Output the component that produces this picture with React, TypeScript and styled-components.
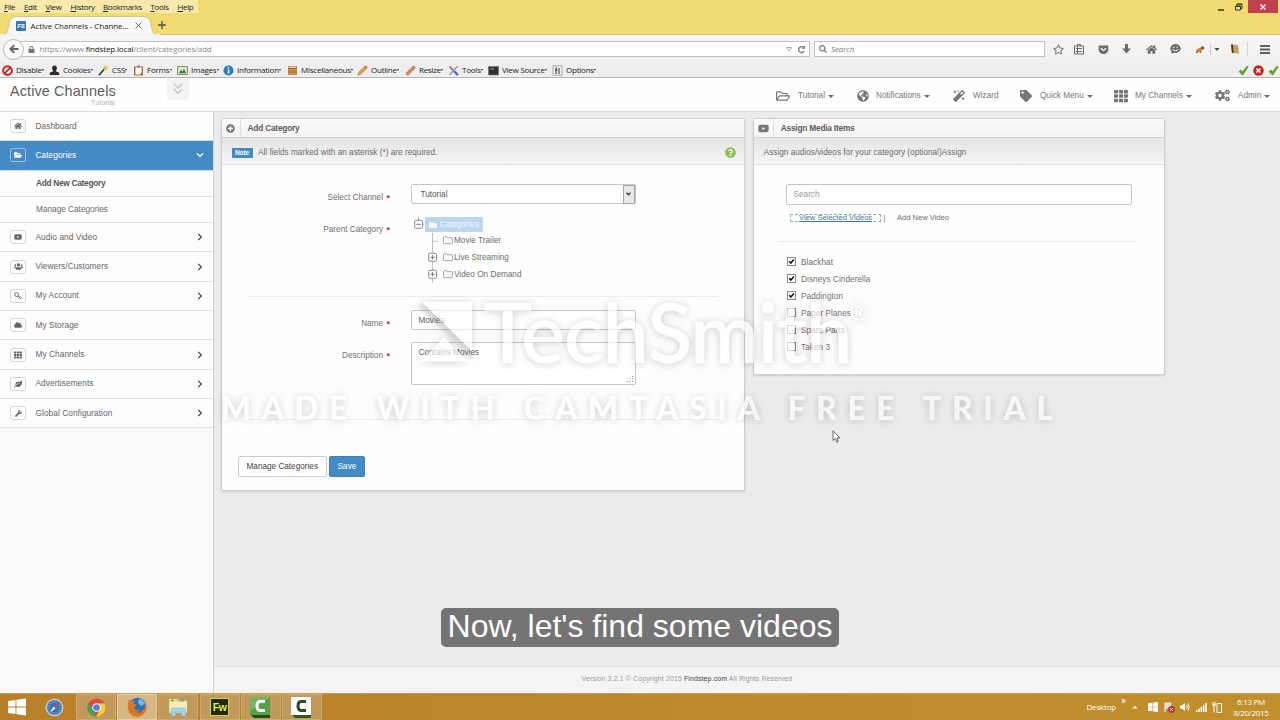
import React from "react";
import styled, { createGlobalStyle, css } from "styled-components";
import {
  FaRegFolderOpen, FaGlobeAmericas, FaMagic, FaTag, FaTh, FaCogs, FaHome, FaFolderOpen, FaYoutube,
  FaUsers, FaCloud, FaLeaf, FaWrench, FaPlusCircle, FaQuestionCircle, FaChevronRight, FaChevronDown,
  FaGetPocket, FaRegStar, FaLock, FaSearch, FaFolder,
} from "react-icons/fa";

const Global = createGlobalStyle`
  * { box-sizing: border-box; }
  html, body { margin: 0; overflow: hidden; }
  svg { display: block; flex: none; }
`;

const UI = `"Open Sans", "Noto Sans", sans-serif`;
const ARIAL = `"Liberation Sans", Arial, sans-serif`;

const Screen = styled.div`
  position: relative;
  width: 1280px;
  height: 720px;
  overflow: hidden;
  display: flex;
  flex-direction: column;
  font: 8px/10px ${ARIAL};
  color: #6f6f6f;
  white-space: nowrap;
`;

/* ---------- browser chrome ---------- */
const TitleBar = styled.div`
  height: 13px;
  background: #f0dc70;
  display: flex;
  justify-content: space-between;
  flex: none;
`;
const MenuBar = styled.div`
  width: 198px;
  background: #f6e9ab;
  display: flex;
  padding-left: 4px;
  font: 8px/13px ${UI};
  letter-spacing: -0.35px;
  color: #222;
`;
const MenuItem = styled.div<{ $w: number }>`
  width: ${(p) => p.$w}px;
  &::first-letter { text-decoration: underline; }
`;
const WinButtons = styled.div`
  display: flex;
  align-items: center;
  padding-right: 2px;
`;
const WinButton = styled.div<{ $w: number; $close?: boolean }>`
  width: ${(p) => p.$w}px;
  height: 13px;
  display: flex;
  align-items: center;
  justify-content: center;
  ${(p) => p.$close && css`background: #c04050;`}
`;
const TabStrip = styled.div`
  height: 22px;
  background: #f0dc70;
  border-bottom: 1px solid #d3c98c;
  display: flex;
  align-items: flex-end;
  flex: none;
`;
const Tab = styled.div`
  position: relative;
  width: 156px;
  height: 19px;
  margin-bottom: -1px;
  display: flex;
  align-items: center;
  padding-left: 16px;
  font: 8px/18px ${UI};
  letter-spacing: -0.1px;
  color: #222;
`;
const TabShape = styled.svg`
  position: absolute;
  left: 0;
  top: 0;
`;
const TabClose = styled.svg`
  position: relative;
`;
const Favicon = styled.span`
  position: relative;
  width: 10px;
  height: 10px;
  margin-right: 4.5px;
  background: #3678b9;
  border-radius: 1px;
  color: #fff;
  font: italic bold 6px/10px ${ARIAL};
  text-align: center;
`;
const TabTitle = styled.span`
  position: relative;
  width: 104.5px;
`;
const NewTab = styled.div`
  height: 19px;
  padding: 6px 0 0 2px;
`;
const NavBar = styled.div`
  height: 28px;
  background: linear-gradient(#f6f6f8, #efefef);
  display: flex;
  align-items: center;
  flex: none;
`;
const BackButton = styled.div`
  position: relative;
  width: 21px;
  height: 21px;
  margin-left: 3px;
  border-radius: 50%;
  border: 1px solid #b5b5b5;
  background: #fbfbfb;
  display: flex;
  align-items: center;
  justify-content: center;
  z-index: 1;
`;
const Field = styled.div<{ $w: number; $ml: number }>`
  width: ${(p) => p.$w}px;
  margin-left: ${(p) => p.$ml}px;
  height: 16px;
  border: 1px solid #c2c2c4;
  background: #fff;
  display: flex;
  align-items: center;
  font: 8px/14px ${UI};
  color: #8a8a8a;
`;
const Url = styled.span`
  flex: 1;
  margin-left: 4.5px;
  letter-spacing: -0.15px;
  b { font-weight: 400; color: #111; }
`;
const SearchHint = styled.i`
  margin-left: 4px;
  color: #777;
  letter-spacing: -0.1px;
`;
const NavIcons = styled.div`
  display: flex;
  align-items: center;
  color: #6b6b6d;
`;
const Slot = styled.span<{ $w: number }>`
  width: ${(p) => p.$w}px;
  height: 14px;
  display: flex;
  align-items: center;
`;
const DevBar = styled.div`
  height: 15px;
  background: #eeeeee;
  border-bottom: 1px solid #b4b4b4;
  display: flex;
  align-items: center;
  padding-left: 2px;
  flex: none;
`;
const DevItem = styled.div<{ $w: number }>`
  width: ${(p) => p.$w}px;
  display: flex;
  align-items: center;
  gap: 3px;
  font: 8px/14px ${UI};
  letter-spacing: -0.23px;
  color: #222;
  > svg { width: 11px; height: 11px; }
`;
const Tiny = styled.span`
  display: inline-block;
  border: 1.6px solid transparent;
  border-top: 2px solid #333;
  border-bottom: 0;
  vertical-align: 2px;
  margin-left: 0.3px;
`;
const DevStatus = styled.div`
  margin-left: auto;
  display: flex;
  gap: 4px;
  padding-right: 1.5px;
`;

/* ---------- web page ---------- */
const AppHeader = styled.header`
  height: 34px;
  flex: none;
  background: #fefefe;
  border-bottom: 1px solid #dcdcdc;
  display: flex;
`;
const Brand = styled.div`
  width: 116px;
  padding: 5px 1px 0 10px;
  text-align: right;
`;
const BrandName = styled.div`
  font-size: 14.4px;
  line-height: 16px;
  letter-spacing: 0.12px;
  color: #5c5c5c;
  text-align: left;
`;
const BrandSub = styled.div`
  font-size: 7px;
  line-height: 8px;
  color: #b2b2b2;
  letter-spacing: 0.1px;
`;
const Collapse = styled.div`
  width: 22px;
  height: 22px;
  margin-left: 51px;
  background: #f3f3f3;
  border-radius: 0 0 3px 3px;
  padding: 5px 0 0 6px;
`;
const TopNav = styled.nav`
  margin-left: auto;
  display: flex;
  height: 35px;
  align-items: center;
  color: #777;
`;
const TopItem = styled.div<{ $w: number; $gap: number }>`
  width: ${(p) => p.$w}px;
  display: flex;
  align-items: center;
  font-size: 8.2px;
  > svg { margin-right: ${(p) => p.$gap}px; }
`;
const Caret = styled.i`
  margin: 1px 0 0 3px;
  border: 3px solid transparent;
  border-top: 3px solid #6b6b6b;
  border-bottom: 0;
`;
const Page = styled.div`
  flex: 1;
  min-height: 0;
  display: flex;
`;
const Sidebar = styled.aside`
  width: 213.5px;
  flex: none;
  background: #f9f9f9;
  border-right: 1px solid #d2d2d2;
`;
const SideItem = styled.div<{ $active?: boolean }>`
  height: 29.33px;
  padding: 0 9px 0 10px;
  display: flex;
  align-items: center;
  border-bottom: 1px solid #e0e0e0;
  background: ${(p) => (p.$active ? "#448bc6" : "#fdfdfd")};
  color: ${(p) => (p.$active ? "#fff" : "#666")};
  font-size: 8.3px;
  line-height: 11px;
  letter-spacing: 0.06px;
  > svg:last-child { margin-left: auto; }
`;
const IconBox = styled.span<{ $active?: boolean }>`
  width: 16px;
  height: 14px;
  margin-right: 9.5px;
  border: 1px solid ${(p) => (p.$active ? "#9cc4e6" : "#d5d5d5")};
  border-radius: 2.5px;
  display: flex;
  align-items: center;
  justify-content: center;
`;
const SubItem = styled.div<{ $bold?: boolean }>`
  height: 26.2px;
  padding-left: 36px;
  line-height: ${(p) => (p.$bold ? 25 : 24)}px;
  border-bottom: 1px solid #e0e0e0;
  background: #fdfdfd;
  font-size: 8.3px;
  letter-spacing: ${(p) => (p.$bold ? "-0.28px" : "-0.03px")};
  font-weight: ${(p) => (p.$bold ? 700 : 400)};
  color: ${(p) => (p.$bold ? "#555" : "#6c6c6c")};
`;
const Main = styled.main`
  flex: 1;
  display: flex;
  flex-direction: column;
  background: #ebebeb;
`;
const Panels = styled.div`
  flex: 1;
  display: flex;
  align-items: flex-start;
  gap: 7.6px;
  padding: 6px 0 0 7px;
`;
const Panel = styled.section<{ $w: number; $h: number }>`
  width: ${(p) => p.$w}px;
  height: ${(p) => p.$h}px;
  background: #fdfdfd;
  border: 1px solid #d0d0d0;
  border-radius: 2px;
  box-shadow: 0 1px 2px rgba(0, 0, 0, 0.15);
`;
const PanelHead = styled.div`
  height: 19px;
  display: flex;
  align-items: center;
  background: linear-gradient(#fafafa, #f3f3f3);
  border-bottom: 1px solid #cfcfcf;
  font-weight: 700;
  font-size: 8.3px;
  line-height: 12px;
  letter-spacing: -0.2px;
  color: #5c5c5c;
`;
const HeadIcon = styled.span<{ $w: number }>`
  width: ${(p) => p.$w}px;
  height: 18px;
  margin-right: 7px;
  border-right: 1px solid #ddd;
  display: flex;
  align-items: center;
  justify-content: center;
  color: #777;
`;
const PanelNote = styled.div`
  height: 27px;
  padding: 3px 8px 0 10px;
  display: flex;
  align-items: center;
  background: linear-gradient(#e4e4e4, #f5f5f5);
  border-bottom: 1px solid #dedede;
  font-size: 8.2px;
  letter-spacing: 0.02px;
  color: #6c6c6c;
  > svg { margin-left: auto; }
`;
const Badge = styled.b`
  width: 21px;
  height: 10px;
  margin-right: 5.5px;
  background: #448bc6;
  color: #fff;
  font-size: 6.5px;
  line-height: 10px;
  text-align: center;
  letter-spacing: -0.1px;
`;
const FormBody = styled.div`
  padding: 19px 26px 0;
`;
const FormRow = styled.div<{ $mb: number }>`
  display: flex;
  align-items: flex-start;
  margin-bottom: ${(p) => p.$mb}px;
`;
const RowLabel = styled.label`
  display: flex;
  justify-content: flex-end;
  width: 142.5px;
  padding-top: 8.6px;
  margin-right: 20.5px;
  font-size: 8.2px;
  letter-spacing: 0px;
  b { color: #c0305a; margin-left: 3.5px; font-size: 9px; }
`;
const Input = styled.div<{ $h?: number }>`
  width: 225px;
  height: ${(p) => p.$h ?? 20}px;
  border: 1px solid #c6c6c6;
  border-radius: 2px;
  background: #fff;
  padding: 5px 0 0 7px;
  font-size: 8.2px;
  color: #606060;
  display: flex;
  justify-content: space-between;
`;
const SelectBox = styled(Input)`
  padding: 0 0 0 9px;
  align-items: center;
  line-height: 12px;
  color: #555;
`;
const SelectValue = styled.span`
  padding-top: 2px;
`;
const SelectArrow = styled.span`
  width: 11.5px;
  height: 19px;
  background: #e8e8e8;
  border: 1px solid #a5a5a5;
  display: flex;
  align-items: center;
  justify-content: center;
`;
const Grip = styled.svg`
  align-self: flex-end;
  margin: 0 1px 1px 0;
`;
const Rule = styled.hr<{ $mt: number; $mb: number }>`
  height: 1px;
  border: 0;
  background: #ececec;
  margin: ${(p) => p.$mt}px 0 ${(p) => p.$mb}px;
`;
const Tree = styled.div`
  width: 225px;
  padding-left: 3px;
`;
const TreeRow = styled.div<{ $child?: boolean }>`
  height: 16.65px;
  padding-left: ${(p) => (p.$child ? 14.5 : 0)}px;
  display: flex;
  align-items: center;
  font-size: 8.2px;
  line-height: 12px;
  letter-spacing: 0.02px;
  color: #6c6c6c;
  > svg:nth-child(2) { margin: 0 1px 0 5px; }
`;
const TreeLabel = styled.span`
  padding-top: 1px;
`;
const TreeSelected = styled.span`
  height: 14.5px;
  width: 58px;
  margin-left: 1px;
  padding: 1px 0 0 4px;
  gap: 3px;
  display: flex;
  align-items: center;
  background: #bdd6f0;
  border-radius: 1px;
  color: #f1f7fd;
`;
const Actions = styled.div`
  display: flex;
  gap: 2px;
  margin-left: -10px;
`;
const Button = styled.button<{ $w: number; $primary?: boolean }>`
  width: ${(p) => p.$w}px;
  height: 21px;
  padding: 0;
  border-radius: 2px;
  border: 1px solid ${(p) => (p.$primary ? "#3b80ba" : "#ccc")};
  background: ${(p) => (p.$primary ? "#448bc6" : "#fff")};
  color: ${(p) => (p.$primary ? "#fff" : "#444")};
  font: 8.2px/19px ${ARIAL};
  white-space: nowrap;
`;
const MediaBody = styled.div`
  padding: 19px 27px 0 25.4px;
`;
const MediaSearch = styled(Input)`
  width: 346px;
  height: 20.5px;
  margin: 0 0 9px 7px;
  color: #999;
  padding-left: 6.5px;
`;
const Links = styled.div`
  display: flex;
  align-items: center;
  padding-left: 11px;
  height: 9px;
  font-size: 7.6px;
`;
const FocusLink = styled.a`
  width: 91px;
  height: 8px;
  border: 1px dashed #9aa;
  color: #3f7898;
  text-decoration: underline;
  line-height: 6px;
  text-align: center;
  margin-right: 2.5px;
`;
const AddLink = styled.a`
  margin-left: 11.5px;
  letter-spacing: -0.03px;
`;
const CheckRow = styled.label`
  height: 17.1px;
  display: flex;
  align-items: flex-start;
  padding-left: 7.5px;
  gap: 5.5px;
  font-size: 8.2px;
  letter-spacing: 0.06px;
`;
const CheckLabel = styled.span`
  padding-top: 1px;
`;
const CheckBox = styled.span`
  width: 9px;
  height: 9px;
  border: 1px solid #8a8a8a;
  background: #fff;
`;
const Footer = styled.footer`
  height: 27px;
  background: #f4f4f4;
  border-top: 1px solid #dedede;
  font-size: 7px;
  letter-spacing: 0.1px;
  line-height: 24px;
  padding-left: 368px;
  color: #999;
  b { font-weight: 400; color: #444; }
`;

/* ---------- taskbar ---------- */
const TaskBar = styled.div`
  height: 27px;
  flex: none;
  background: linear-gradient(90deg, #b98029, #c0902c);
  border-top: 1px solid #c79d4e;
  display: flex;
  color: #fff;
`;
const TaskSlot = styled.div<{ $w: number; $state?: "open" | "active" }>`
  width: ${(p) => p.$w}px;
  height: 26px;
  display: flex;
  align-items: center;
  justify-content: center;
  ${(p) => p.$state && css`
    margin-right: 1.2px;
    border: 1px solid ${p.$state === "active" ? "#e4cfa6" : "#cda96d"};
    background: ${p.$state === "active" ? "#d6b783" : "#c1995a"};
  `}
`;
const FwTile = styled.span`
  width: 19px;
  height: 18px;
  border: 1px solid #cbd81e;
  background: #24260b;
  color: #e3ee2c;
  font: bold 10.5px/16px ${ARIAL};
  text-align: center;
  letter-spacing: -0.5px;
`;
const Tray = styled.div`
  margin-left: auto;
  display: flex;
  align-items: center;
  font: 8px/12px ${UI};
  letter-spacing: -0.2px;
`;
const Overflow = styled.span`
  width: 11px;
  margin: -15px 0 0 5px;
  font-size: 10px;
`;
const Clock = styled.div`
  width: 58px;
  text-align: center;
  line-height: 11.5px;
  letter-spacing: -0.3px;
`;

/* ---------- overlays ---------- */
const Watermark = styled.div`
  position: absolute;
  inset: 0;
  pointer-events: none;
  opacity: 0.64;
  color: #fff;
  text-shadow: 0 1px 8px rgba(0, 0, 0, 0.3);
`;
const MarkLogo = styled.svg`
  position: absolute;
  left: 410px;
  top: 292px;
  filter: drop-shadow(0 1px 4px rgba(0, 0, 0, 0.28));
`;
const MarkName = styled.div`
  position: absolute;
  left: 483px;
  top: 283px;
  font: 600 83px/96px Lato, sans-serif;
  letter-spacing: -1.3px;
`;
const MarkReg = styled.div`
  position: absolute;
  left: 849px;
  top: 299px;
  font: 23px/24px Lato, sans-serif;
`;
const MarkLine = styled.div`
  position: absolute;
  left: 221px;
  top: 388px;
  font: 900 31.5px/40px Lato, sans-serif;
  letter-spacing: 10.75px;
`;
const Caption = styled.div`
  position: absolute;
  left: 441px;
  top: 608px;
  width: 398px;
  height: 39px;
  border-radius: 5px;
  background: #747474;
  color: #fff;
  font: 32px/37px ${ARIAL};
  text-align: center;
`;
const Cursor = styled.svg`
  position: absolute;
  left: 832px;
  top: 430px;
`;

const KeyIcon = () => (
  <svg width="8" height="8" viewBox="0 0 8 8" fill="none" stroke="currentColor">
    <circle cx="2.6" cy="2.6" r="1.9" strokeWidth="1" />
    <path d="M4 4l3.2 3.2M5.2 5.4l1.2-1.2M6.3 6.5l1.1-1.1" strokeWidth="1" />
  </svg>
);

const Check = () => (
  <svg width="11" height="11" viewBox="0 0 11 11">
    <path d="M1 6.4l2-1.3 1.5 1.8L8.6 1.4l1.6.4L5 9.8H4z" fill="#5fa422" stroke="#3f7f14" strokeWidth=".5" />
  </svg>
);

const Tick = () => (
  <svg width="7" height="7" viewBox="0 0 7 7">
    <path d="M1.2 3.2L2.8 5 5.9 1.4" fill="none" stroke="#111" strokeWidth="1.5" />
  </svg>
);

const Node = ({ kind }: { kind: "minus" | "plus" | "leaf" }) => (
  <svg width="10" height="16.65" viewBox="0 0 10 16.65" fill="none" stroke="#a5a5a5">
    {kind === "minus" && <path d="M4.5 1v3M9 8.3h1" />}
    {kind === "leaf" && <path d="M4.5 0v16.65M4.5 8.3H10" stroke="#bdbdbd" />}
    {kind === "plus" && <path d="M4.5 0v4M4.5 12.5v4M9 8.3h1" stroke="#bdbdbd" />}
    {kind !== "leaf" && <rect x=".7" y="4.3" width="7.8" height="8" rx="1" stroke="#8c8c8c" />}
    {kind !== "leaf" && <path d="M2.4 8.3h4.4" stroke="#777" />}
    {kind === "plus" && <path d="M4.6 6.1v4.4" stroke="#777" />}
  </svg>
);

const FolderOutline = () => (
  <svg width="10" height="9" viewBox="0 0 10 9" fill="none" stroke="#8c8c8c" strokeWidth=".8">
    <path d="M.5 1.6q0-.9.9-.9h2q.9 0 .9 1h4.1q1 0 1 1v4q0 1-1 1h-7q-.9 0-.9-1z" />
  </svg>
);

const devIcons: Record<string, React.ReactNode> = {
  Disable: <><circle cx="5.5" cy="5.5" r="4.3" fill="#fff" stroke="#c6221d" strokeWidth="2" /><path d="M2.7 8.3l5.6-5.6" stroke="#c6221d" strokeWidth="1.8" /></>,
  Cookies: <path d="M5.5.5a2.5 2.5 0 012 4L6.8 6.3l3.4 1.4V10H.8V7.7l3.4-1.4L3.5 4.5a2.5 2.5 0 012-4z" fill="#2b2b2b" />,
  CSS: <><path d="M1 10.3l6-7" stroke="#333" strokeWidth="1.6" /><path d="M7.5 0l.8 1.8L10.5 2 9 3.6l.5 2L7.5 4.6 5.6 5l.6-2L5 1.4l2 .2z" fill="#f2c52e" /></>,
  Forms: <><path d="M1 1.5h9v9H1z" fill="#b4693a" /><path d="M2.5 2.5h6.2v5l-2.2 2h-4z" fill="#fff" /><path d="M4 .5h3v2H4z" fill="#888" /></>,
  Images: <><path d="M.5 1.5h10v8H.5z" fill="#d9e3cf" stroke="#7a9a6d" /><path d="M2 8.2l2-3.5 1.5 2 1.5-3 2 4.5z" fill="#3d7a35" /></>,
  Information: <><circle cx="5.5" cy="5.5" r="5" fill="#2a7ac8" /><path d="M5.5 4.5v4M5.5 2.2v1.4" stroke="#fff" strokeWidth="1.6" /></>,
  Miscellaneous: <><path d="M1 1h9v9H1z" fill="#c98a45" /><path d="M1 3.5h9M1 7h9" stroke="#a96d30" /><path d="M2 1.5h7V3H2z" fill="#e9c792" /></>,
  Outline: <><path d="M.8 10.2l1-3 6-6 2 2-6 6z" fill="#e2a244" stroke="#94601f" strokeWidth=".5" /><path d="M7.8 1.2l1-.8 1.8 1.8-.8 1z" fill="#d2504a" /></>,
  Resize: <path d="M.8 8.5L8.5.8l2 2-7.700 7.700z" fill="#cf8f58" stroke="#95602f" strokeWidth=".6" />,
  Tools: <><path d="M1.5 1.5l8 8.3" stroke="#777" strokeWidth="1.7" /><path d="M9.5 1.2l-8 8.5" stroke="#9a9a9a" strokeWidth="1.5" /><path d="M6.5 6.5L10 10" stroke="#3a6fc0" strokeWidth="2.2" /></>,
  "View Source": <><path d="M.5 1.5h10V10H.5z" fill="#2c342c" stroke="#777" strokeWidth=".7" /><path d="M2 4h4" stroke="#9c9" strokeWidth=".8" /></>,
  Options: <><path d="M1 .8h9v9.5H1z" fill="#eee" stroke="#999" strokeWidth=".8" /><path d="M4 9V3.5q0-1 1-1M7 3v6M3 5h2.5" stroke="#333" fill="none" strokeWidth="1" /></>,
};
const devItems: [string, number][] = [
  ["Disable", 47], ["Cookies", 49], ["CSS", 35], ["Forms", 44], ["Images", 46], ["Information", 64],
  ["Miscellaneous", 70], ["Outline", 48], ["Resize", 43], ["Tools", 40], ["View Source", 64], ["Options", 50],
];
const menus: [string, number][] = [["File", 20], ["Edit", 21.5], ["View", 25], ["History", 32.5], ["Bookmarks", 47.5], ["Tools", 27], ["Help", 20]];

const topItems: [React.ReactNode, string, number, number, boolean][] = [
  [<FaRegFolderOpen size={14} />, "Tutorial", 81, 8, true],
  [<FaGlobeAmericas size={12} />, "Notifications", 96, 7, true],
  [<FaMagic size={12} />, "Wizard", 67, 8, false],
  [<FaTag size={12} />, "Quick Menu", 94, 8, true],
  [<FaTh size={14} />, "My Channels", 101, 7, true],
  [<FaCogs size={15} />, "Admin", 65, 8, true],
];

const sideItems: [React.ReactNode, string, boolean][] = [
  [<FaYoutube size={8} />, "Audio and Video", true],
  [<FaUsers size={9} />, "Viewers/Customers", true],
  [<KeyIcon />, "My Account", true],
  [<FaCloud size={8} />, "My Storage", false],
  [<FaTh size={8} />, "My Channels", true],
  [<FaLeaf size={8} />, "Advertisements", true],
  [<FaWrench size={7} />, "Global Configuration", true],
];
const media: [string, boolean][] = [
  ["Blackhat", true], ["Disneys Cinderella", true], ["Paddington", true], ["Paper Planes", false], ["Spare Parts", false], ["Taken 3", false],
];

const Browser = () => (
  <>
    <TitleBar>
      <MenuBar>{menus.map(([m, w]) => <MenuItem key={m} $w={w}>{m}</MenuItem>)}</MenuBar>
      <WinButtons>
        <WinButton $w={18}><svg width="6" height="8"><path d="M0 7h6" stroke="#3c3820" strokeWidth="1.5" /></svg></WinButton>
        <WinButton $w={18}><svg width="8" height="8" fill="none" stroke="#3c3820"><path d="M.5 3h5v4h-5zM2 3V1h5v4.5H6M.5 3.5h5M2 1.3h5" /></svg></WinButton>
        <WinButton $w={30} $close><svg width="6" height="6" stroke="#fff" strokeWidth="1.2"><path d="M.5.5l5 5M5.5.5l-5 5" /></svg></WinButton>
      </WinButtons>
    </TitleBar>
    <TabStrip>
      <Tab>
        <TabShape width="160" height="19" viewBox="0 0 160 19">
          <path d="M0 19c6 0 7-2 8-6l1.500-7Q11 .5 16 .5h128q5 0 6.500 5.500l1.500 7c1 4 2 6 8 6z" fill="#f8f8f8" stroke="#c9bd7c" strokeWidth=".8" />
          <path d="M0 19h160" stroke="#f6f6f8" strokeWidth="1.5" />
        </TabShape>
        <Favicon>FS</Favicon>
        <TabTitle>Active Channels - Channe...</TabTitle>
        <TabClose width="7" height="7" stroke="#666" strokeWidth="1"><path d="M.5.5l6 6M6.5.5l-6 6" /></TabClose>
      </Tab>
      <NewTab><svg width="8" height="8" stroke="#555046" strokeWidth="1.4"><path d="M4 0v8M0 4h8" /></svg></NewTab>
    </TabStrip>
    <NavBar>
      <BackButton>
        <svg width="10" height="10" fill="none" stroke="#666" strokeWidth="2"><path d="M9.5 5H2M5.2 1.3L1.5 5l3.7 3.7" /></svg>
      </BackButton>
      <Field $w={790} $ml={-4}>
        <Slot $w={7} /><FaLock size={7} color="#777" />
        <Url>https://www.<b>findstep.local</b>/client/categories/add</Url>
        <svg width="6" height="5"><path d="M.5.5h5L3 4z" fill="none" stroke="#aaa" /></svg>
        <Slot $w={5} />
        <svg width="9" height="9" fill="none" stroke="#777" strokeWidth="1.3"><path d="M7.2 6.2a3 3 0 11-.4-3.8" /><path d="M8 .5v3.300H4.700z" fill="#777" stroke="none" /></svg>
        <Slot $w={3.5} />
      </Field>
      <Field $w={231} $ml={4}>
        <Slot $w={4} /><FaSearch size={8} color="#777" />
        <SearchHint>Search</SearchHint>
      </Field>
      <NavIcons>
        <Slot $w={7.5} />
        <Slot $w={21}><FaRegStar size={11} /></Slot>
        <Slot $w={24}><svg width="10" height="11" fill="none" stroke="#6b6b6d"><path d="M.5 2h9v8h-9zM3.5 2V.5h3V2M2 4.500h6M2 7.500h6M3.500 3v6" /></svg></Slot>
        <Slot $w={24}><FaGetPocket size={11} /></Slot>
        <Slot $w={24}><svg width="9" height="10" fill="#6b6b6d"><path d="M3 0h3v4.500h3L4.500 9.500 0 4.500h3z" /></svg></Slot>
        <Slot $w={24}><FaHome size={11} /></Slot>
        <Slot $w={25}><svg width="11" height="10"><ellipse cx="5.5" cy="4.5" rx="5.2" ry="4.4" fill="#6b6b6d" /><path d="M1 9.500l1-3 3 2z" fill="#6b6b6d" /><path d="M2.500 5.500q3 3 6 0" stroke="#fff" fill="none" /><path d="M3 3.200h1.500M6.500 3.200H8" stroke="#fff" /></svg></Slot>
        <Slot $w={15}><svg width="10" height="9"><path d="M1 5l4-2.500 3 .5-2 3-4 2z" fill="#d9812a" /><circle cx="7.5" cy="3" r="1.8" fill="#a8521b" /><path d="M1 8l2-2M5 8l1-2" stroke="#633" /></svg></Slot>
        <Slot $w={20}><svg width="12" height="11"><path d="M.5 0v11" stroke="#ccc" /><path d="M4.500 4h5L7 7z" fill="#444" /></svg></Slot>
        <Slot $w={17}><svg width="10" height="10"><path d="M1 .5l7 .5 1 8.500-7-.5z" fill="#c8a064" /><path d="M1 .5l2 .1.500 8.500L2 9z" fill="#4b3524" /></svg></Slot>
        <Slot $w={13}><svg width="2" height="14"><path d="M.5 0v14" stroke="#d4d4d4" /></svg></Slot>
        <svg width="10" height="9" stroke="#5f5f61" strokeWidth="1.8"><path d="M0 1h10M0 4.500h10M0 8h10" /></svg>
      </NavIcons>
    </NavBar>
    <DevBar>
      {devItems.map(([n, w]) => (
        <DevItem key={n} $w={w}>
          <svg viewBox="0 0 11 11">{devIcons[n]}</svg>
          <span>{n}<Tiny /></span>
        </DevItem>
      ))}
      <DevStatus>
        <Check />
        <svg width="11" height="11"><circle cx="5.5" cy="5.5" r="5.2" fill="#c8201d" /><path d="M3.500 3.500l4 4M7.500 3.500l-4 4" stroke="#fff" strokeWidth="1.7" /></svg>
        <Check />
      </DevStatus>
    </DevBar>
  </>
);

const AddCategory = () => (
  <Panel $w={524.6} $h={373}>
    <PanelHead><HeadIcon $w={19}><FaPlusCircle size={9} /></HeadIcon>Add Category</PanelHead>
    <PanelNote>
      <Badge>Note</Badge>All fields marked with an asterisk (*) are required.
      <FaQuestionCircle size={11} color="#8cc152" />
    </PanelNote>
    <FormBody>
      <FormRow $mb={12}>
        <RowLabel>Select Channel <b>*</b></RowLabel>
        <SelectBox><SelectValue>Tutorial</SelectValue><SelectArrow><svg width="5" height="4" fill="none" stroke="#333" strokeWidth="1.3"><path d="M.5.8l2 2 2-2" /></svg></SelectArrow></SelectBox>
      </FormRow>
      <FormRow $mb={13}>
        <RowLabel>Parent Category <b>*</b></RowLabel>
        <Tree>
          <TreeRow><Node kind="minus" /><TreeSelected><FaFolder size={8} />Categories</TreeSelected></TreeRow>
          <TreeRow $child><Node kind="leaf" /><FolderOutline /><TreeLabel>Movie Trailer</TreeLabel></TreeRow>
          <TreeRow $child><Node kind="plus" /><FolderOutline /><TreeLabel>Live Streaming</TreeLabel></TreeRow>
          <TreeRow $child><Node kind="plus" /><FolderOutline /><TreeLabel>Video On Demand</TreeLabel></TreeRow>
        </Tree>
      </FormRow>
      <Rule $mt={0} $mb={13.5} />
      <FormRow $mb={12}><RowLabel>Name <b>*</b></RowLabel><Input>Movies</Input></FormRow>
      <FormRow $mb={33.5}>
        <RowLabel>Description <b>*</b></RowLabel>
        <Input $h={43}>Contains Movies
          <Grip width="7" height="7" fill="#888"><path d="M5 0h1v1H5zM5 2.500h1v1H5zM5 5h1v1H5zM2.500 2.500h1v1h-1zM2.500 5h1v1h-1zM0 5h1v1H0z" /></Grip>
        </Input>
      </FormRow>
      <Rule $mt={0} $mb={36.5} />
      <Actions><Button $w={89.5}>Manage Categories</Button><Button $w={36} $primary>Save</Button></Actions>
    </FormBody>
  </Panel>
);

const AssignMedia = () => (
  <Panel $w={412.5} $h={257.3}>
    <PanelHead><HeadIcon $w={20}><FaYoutube size={11} /></HeadIcon>Assign Media Items</PanelHead>
    <PanelNote>Assign audios/videos for your category (optional)Assign</PanelNote>
    <MediaBody>
      <MediaSearch>Search</MediaSearch>
      <Links><FocusLink>View Selected Videos</FocusLink>|<AddLink>Add New Video</AddLink></Links>
      <Rule $mt={18} $mb={15} />
      {media.map(([name, on]) => (
        <CheckRow key={name}><CheckBox>{on && <Tick />}</CheckBox><CheckLabel>{name}</CheckLabel></CheckRow>
      ))}
    </MediaBody>
  </Panel>
);

export default function App() {
  return (
    <Screen>
      <Global />
      <Browser />
      <AppHeader>
        <Brand><BrandName>Active Channels</BrandName><BrandSub>Tutorial</BrandSub></Brand>
        <Collapse><svg width="10" height="12" fill="none" stroke="#c9c9c9" strokeWidth="1.6"><path d="M.8.8L5 5 9.200.8M.8 6L5 10.200 9.200 6" /></svg></Collapse>
        <TopNav>
          {topItems.map(([icon, name, w, gap, caret]) => (
            <TopItem key={name} $w={w} $gap={gap}>{icon}{name}{caret && <Caret />}</TopItem>
          ))}
        </TopNav>
      </AppHeader>
      <Page>
        <Sidebar>
          <SideItem><IconBox><FaHome size={8} /></IconBox>Dashboard</SideItem>
          <SideItem $active><IconBox $active><FaFolderOpen size={8} /></IconBox>Categories<FaChevronDown size={8} /></SideItem>
          <SubItem $bold>Add New Category</SubItem>
          <SubItem>Manage Categories</SubItem>
          {sideItems.map(([icon, name, arrow]) => (
            <SideItem key={name}><IconBox>{icon}</IconBox>{name}{arrow && <FaChevronRight size={8} color="#444" />}</SideItem>
          ))}
        </Sidebar>
        <Main>
          <Panels><AddCategory /><AssignMedia /></Panels>
          <Footer>Version 3.2.1 © Copyright 2015 <b>Findstep.com</b> All Rights Reserved</Footer>
        </Main>
      </Page>
      <TaskBar>
        <TaskSlot $w={33}><svg width="18" height="18" fill="#fff"><path d="M0 3l7.500-1.100v6.600H0zM8.400 1.800L18 .4v8.100H8.400zM0 9.400h7.500V16L0 15zM8.400 9.400H18v8.200l-9.600-1.400z" /></svg></TaskSlot>
        <TaskSlot $w={43}><svg width="19" height="19"><circle cx="9.5" cy="9.5" r="9" fill="#bfc7cf" /><circle cx="9.5" cy="9.5" r="7.3" fill="#3873b5" /><circle cx="9.5" cy="9.5" r="5.5" fill="none" stroke="#cfe2f5" strokeWidth="1" strokeDasharray="1 1.6" /><path d="M14 4.500l-3.500 6-2-2z" fill="#d94a3d" /><path d="M5 14.500l3.500-6 2 2z" fill="#fff" /></svg></TaskSlot>
        <TaskSlot $w={40} $state="open"><svg width="19" height="19" viewBox="0 0 20 20"><circle cx="10" cy="10" r="9.5" fill="#dd4b3e" /><path d="M1.800 5.200L6 12.200 9.500 19.500A9.500 9.500 0 011.800 5.200z" fill="#3ba55a" /><path d="M10 5.800h8.500A9.500 9.500 0 019.500 19.500L13.800 12z" fill="#f8ce3c" /><circle cx="10" cy="10" r="4.5" fill="#fff" /><circle cx="10" cy="10" r="3.5" fill="#4a86e0" /></svg></TaskSlot>
        <TaskSlot $w={40} $state="active"><svg width="20" height="20" viewBox="0 0 20 20"><circle cx="10.5" cy="9.5" r="8.7" fill="#2f6fb5" /><path d="M12 2q4 0 6 5l-4 2-3-3z" fill="#77b8e4" /><path d="M2 2.500l2 2Q6 3.500 8 4q-1.500 1.500-1 3l2.500.500Q9 9.500 7 10q1 4 6 2.500-2 3-5 2 5 3 9-2 2-3 1-7 3 5 .5 9.500Q15 20 9.500 19.700 2 19 .8 11 .5 6 2 2.500z" fill="#dc7721" /></svg></TaskSlot>
        <TaskSlot $w={40} $state="open"><svg width="21" height="20"><path d="M1 2h8l1 1.500h9V16H1z" fill="#eed88b" /><path d="M2 5h17v9H2z" fill="#f8edb8" /><path d="M3 3.500h3" stroke="#5cb04f" strokeWidth="1.5" /><path d="M12 3.500h4" stroke="#4ca5d8" strokeWidth="1.5" /><path d="M3.500 19v-7q0-1 1-1h12q1 0 1 1v7h-4v-4h-6v4z" fill="#a6d3ea" stroke="#79b4d4" strokeWidth=".6" /></svg></TaskSlot>
        <TaskSlot $w={40} $state="open"><FwTile>Fw</FwTile></TaskSlot>
        <TaskSlot $w={40} $state="open"><svg width="21" height="21"><path d="M0 0h20v18H0z" fill="#58a044" /><path d="M0 0h20L0 14z" fill="#75b560" /><path d="M1 18h19v3H4z" fill="#1f4e19" /><path d="M15 4.500H9.500Q7 5 7 9t2.500 4.500H15" fill="none" stroke="#fff" strokeWidth="3" /></svg></TaskSlot>
        <TaskSlot $w={40} $state="open"><svg width="21" height="21"><path d="M0 0h20v18H0z" fill="#fff" /><path d="M1 18h19v3H4z" fill="#2c5c22" /><path d="M15 4.500H9.500Q7 5 7 9t2.500 4.500H15" fill="none" stroke="#2b4e20" strokeWidth="3" /></svg></TaskSlot>
        <Tray>
          Desktop<Overflow>»</Overflow>
          <Slot $w={16}><svg width="6" height="4"><path d="M.5 3.500L3 .8l2.500 2.700z" fill="#fff" /></svg></Slot>
          <Slot $w={16}><svg width="10" height="10" fill="#fff"><path d="M0 1.300l4.500-.6v4H0zM5.200.6L10 0v4.700H5.200zM0 5.300h4.500v4L0 8.700zM5.200 5.300H10V10l-4.800-.6z" /></svg></Slot>
          <Slot $w={16}><svg width="11" height="11"><path d="M1 10V1h6l-1 2.500L7 6H2" fill="#ddd" stroke="#eee" /><circle cx="7.5" cy="7.5" r="3.4" fill="#d0282a" /><path d="M6 6l3 3M9 6L6 9" stroke="#fff" /></svg></Slot>
          <Slot $w={16}><svg width="10" height="10" fill="none" stroke="#fff"><path d="M0 3.500h2L5 1v8L2 6.500H0z" fill="#fff" stroke="none" /><path d="M6.500 3q1.500 2 0 4M8 1.500q2.500 3.500 0 7" /></svg></Slot>
          <Slot $w={16}><svg width="11" height="10" fill="#fff"><path d="M0 8h1.500v2H0zM2.300 6.500h1.500V10H2.300zM4.600 5h1.500v5H4.600zM6.900 3h1.500v7H6.900zM9.200 1h1.500v9H9.200z" /></svg></Slot>
          <Slot $w={10}><svg width="11" height="11" fill="none" stroke="#fff"><path d="M5 1.500h4.500v9H5zM0 3h4M1 0v3M3 0v3M2 3v7.500" /></svg></Slot>
          <Clock>6:13 PM<br />8/20/2015</Clock>
        </Tray>
      </TaskBar>
      <Watermark>
        <MarkLogo width="70" height="76" viewBox="0 0 70 76">
          <path d="M8 14L62 68V58L12 10z" fill="#aaa" fillOpacity=".4" />
          <path d="M12 10h50v49zM10 69.500l24-24.500 24 24.500z" fill="#fff" />
        </MarkLogo>
        <MarkName>TechSmith</MarkName>
        <MarkReg>®</MarkReg>
        <MarkLine>MADE WITH CAMTASIA FREE TRIAL</MarkLine>
      </Watermark>
      <Cursor width="9" height="13"><path d="M1 .8v9.700l2.300-2 1.500 3.600 1.500-.6-1.500-3.500h3z" fill="#fff" stroke="#444" strokeWidth=".8" /></Cursor>
      <Caption>Now, let's find some videos</Caption>
    </Screen>
  );
}
